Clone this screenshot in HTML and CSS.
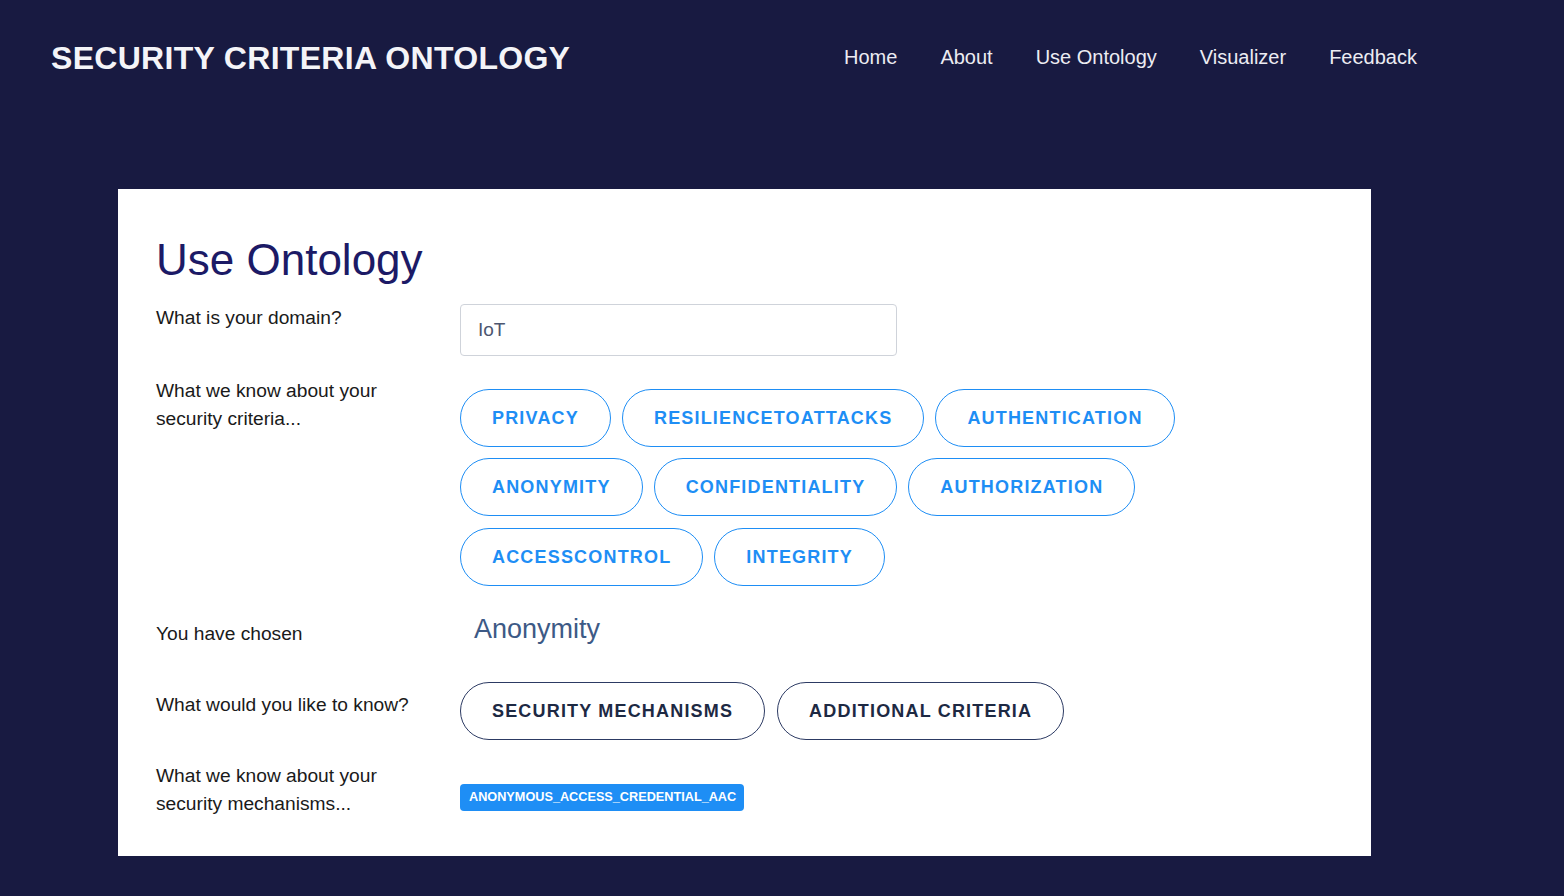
FILE: index.html
```html
<!DOCTYPE html>
<html lang="en">
<head>
<meta charset="utf-8">
<title>Security Criteria Ontology</title>
<link rel="stylesheet" href="styles.css">
</head>
<body>
<header class="topbar">
  <div class="brand">SECURITY CRITERIA ONTOLOGY</div>
  <nav class="nav">
    <a href="#">Home</a>
    <a href="#">About</a>
    <a href="#">Use Ontology</a>
    <a href="#">Visualizer</a>
    <a href="#">Feedback</a>
  </nav>
</header>
<main class="card">
  <h1 class="title">Use Ontology</h1>
  <div class="row row-domain">
    <div class="label">What is your domain?</div>
    <div class="field"><input class="input" type="text" value="IoT"></div>
  </div>
  <div class="row row-criteria">
    <div class="label">What we know about your<br>security criteria...</div>
    <div class="chips">
      <button class="chip">PRIVACY</button>
      <button class="chip">RESILIENCETOATTACKS</button>
      <button class="chip">AUTHENTICATION</button>
      <button class="chip">ANONYMITY</button>
      <button class="chip">CONFIDENTIALITY</button>
      <button class="chip">AUTHORIZATION</button>
      <button class="chip">ACCESSCONTROL</button>
      <button class="chip">INTEGRITY</button>
    </div>
  </div>
  <div class="row row-chosen">
    <div class="label">You have chosen</div>
    <div class="chosen">Anonymity</div>
  </div>
  <div class="row row-know">
    <div class="label">What would you like to know?</div>
    <div class="actions">
      <button class="chip chip-dark">SECURITY MECHANISMS</button>
      <button class="chip chip-dark">ADDITIONAL CRITERIA</button>
    </div>
  </div>
  <div class="row row-mech">
    <div class="label">What we know about your<br>security mechanisms...</div>
    <div class="badges"><span class="badge">ANONYMOUS_ACCESS_CREDENTIAL_AAC</span></div>
  </div>
</main>
</body>
</html>
```
FILE: styles.css
```css
* { box-sizing: border-box; }
html, body { margin: 0; padding: 0; }
body {
  background: #181a41;
  font-family: "Liberation Sans", Arial, sans-serif;
  min-height: 896px;
}
.topbar {
  height: 116px;
  display: flex;
  align-items: center;
  justify-content: space-between;
  padding: 0 147px 0 51px;
}
.brand {
  color: #f4f4f8;
  font-size: 32px;
  font-weight: bold;
  line-height: 37px;
  letter-spacing: 0.3px;
}
.nav {
  display: flex;
  gap: 43px;
  margin-top: -1px;
}
.nav a {
  color: #ececf2;
  text-decoration: none;
  font-size: 20px;
  line-height: 23px;
}
.card {
  display: block;
  background: #ffffff;
  margin: 73px 0 0 118px;
  width: 1253px;
  padding: 46px 38px 38px 38px;
}
.title {
  margin: 0 0 19px 0;
  font-size: 44px;
  font-weight: normal;
  line-height: 50px;
  color: #1c1a66;
}
.row {
  display: grid;
  grid-template-columns: 304px 1fr;
  align-items: start;
}
.label {
  font-size: 19.2px;
  line-height: 28px;
  color: #1a1a1a;
}
.input {
  display: block;
  width: 437px;
  height: 52px;
  border: 1px solid #cfd3da;
  border-radius: 4px;
  padding: 0 17px;
  font-family: "Liberation Sans", Arial, sans-serif;
  font-size: 19px;
  color: #4c5670;
  outline: none;
}
.row-criteria { margin-top: 21px; }
.chips {
  padding-top: 12px;
  display: flex;
  flex-wrap: wrap;
  column-gap: 11px;
  row-gap: 11px;
  max-width: 760px;
}
.chip {
  height: 58px;
  padding: 0 31px;
  border: 1px solid #1e8ef5;
  border-radius: 29px;
  background: #ffffff;
  color: #1e8ef5;
  font-family: "Liberation Sans", Arial, sans-serif;
  font-size: 18px;
  font-weight: bold;
  letter-spacing: 1.18px;
  cursor: pointer;
}
.chip:nth-child(n+7) { margin-top: 1px; }
.row-chosen { margin-top: 27px; }
.row-chosen .label { padding-top: 7px; }
.chosen {
  padding: 1px 0 0 14px;
  font-size: 27px;
  line-height: 31px;
  color: #3d5a86;
}
.row-know { margin-top: 34px; }
.row-know .label { padding-top: 9px; }
.actions {
  display: flex;
  gap: 12px;
}
.chip-dark {
  border-color: #2c3a63;
  color: #1d2943;
}
.row-mech { margin-top: 22px; }
.badges { padding-top: 22px; }
.badge {
  display: inline-block;
  height: 27px;
  line-height: 27px;
  padding: 0 8px 0 9px;
  background: #1e8ef5;
  color: #ffffff;
  border-radius: 4px;
  font-size: 12.7px;
  font-weight: bold;
}
```
